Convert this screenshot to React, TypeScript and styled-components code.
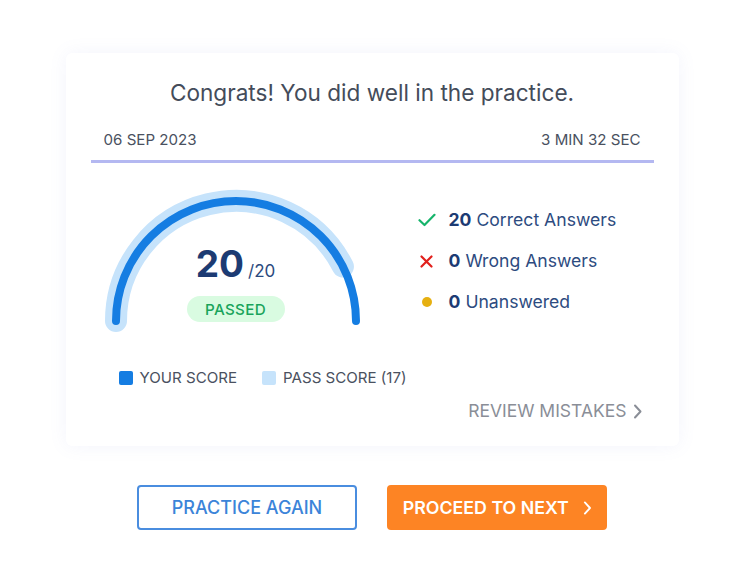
import React from "react";
import styled, { createGlobalStyle } from "styled-components";

// Page-wide reset and font
const GlobalStyle = createGlobalStyle`
  html, body {
    margin: 0;
    background: #ffffff;
    font-family: Inter, "Noto Sans", Arial, sans-serif;
  }
`;

const Page = styled.main`
  width: 744px;
  height: 578px;
  box-sizing: border-box;
  padding-top: 53px;
  display: flex;
  flex-direction: column;
  align-items: center;
`;

// White result card with a faint bluish shadow
const Card = styled.section`
  width: 613px;
  box-sizing: border-box;
  padding: 28px 25px 24px;
  background: #ffffff;
  border-radius: 6px;
  box-shadow: 0 0 18px rgba(120, 130, 220, 0.09);
`;

const Title = styled.h1`
  margin: 0;
  text-align: center;
  font-size: 22.6px;
  line-height: 24px;
  font-weight: 400;
  color: #444c5a;
`;

const MetaRow = styled.div`
  margin-top: 25px;
  padding: 0 13px 10px;
  display: flex;
  justify-content: space-between;
  font-size: 15.1px;
  line-height: 20px;
  color: #4a5160;
  border-bottom: 3px solid #b4b8f1;
`;

const Body = styled.div`
  margin-top: 23px;
  display: flex;
  gap: 46px;
`;

const GaugeBox = styled.div`
  position: relative;
  margin-left: 10px;
  width: 270px;
  height: 150px;
`;

const GaugeCenter = styled.div`
  position: absolute;
  left: 0;
  right: 0;
  top: 56px;
  display: flex;
  flex-direction: column;
  align-items: center;
`;

const Score = styled.div`
  display: flex;
  align-items: baseline;
  gap: 4px;
  color: #1c3b73;
  .value {
    font-size: 37px;
    line-height: 44px;
    font-weight: 700;
  }
  .total {
    font-size: 17px;
    font-weight: 400;
    color: #2b4a7e;
  }
`;

const Badge = styled.span`
  margin-top: 10px;
  width: 98px;
  height: 26px;
  border-radius: 13px;
  background: #d9fbe1;
  color: #19a45b;
  font-size: 15.2px;
  font-weight: 500;
  letter-spacing: 0.3px;
  display: flex;
  align-items: center;
  justify-content: center;
`;

const StatList = styled.ul`
  list-style: none;
  margin: 22px 0 0;
  padding: 0;
  display: flex;
  flex-direction: column;
  gap: 17px;
`;

const Stat = styled.li`
  display: flex;
  align-items: center;
  font-size: 17.6px;
  line-height: 24px;
  color: #2d4b80;
  b {
    color: #1c3b73;
    font-weight: 700;
    margin-right: 5px;
  }
`;

const StatIcon = styled.span`
  width: 20px;
  height: 20px;
  margin-right: 12px;
  display: flex;
  align-items: center;
  justify-content: center;
`;

const Dot = styled.span`
  width: 10px;
  height: 10px;
  border-radius: 50%;
  background: #e6b011;
`;

const Legend = styled.div`
  margin-top: 32px;
  padding-left: 28px;
  display: flex;
  gap: 25px;
  font-size: 15.1px;
  line-height: 20px;
  color: #4a5160;
`;

const LegendItem = styled.span`
  display: flex;
  align-items: center;
  gap: 7px;
`;

const Swatch = styled.span<{ $color: string }>`
  width: 14px;
  height: 14px;
  border-radius: 2px;
  background: ${(p) => p.$color};
`;

const ReviewRow = styled.div`
  margin-top: 12px;
  padding-right: 12px;
  display: flex;
  justify-content: flex-end;
`;

const ReviewLink = styled.a`
  display: flex;
  align-items: center;
  gap: 6px;
  font-size: 17.5px;
  line-height: 22px;
  color: #8a8e97;
  cursor: pointer;
`;

const Actions = styled.div`
  margin-top: 39px;
  display: flex;
  gap: 30px;
`;

const Button = styled.button<{ $primary?: boolean }>`
  width: 220px;
  height: 45px;
  box-sizing: border-box;
  border-radius: 4px;
  font-family: inherit;
  font-size: ${(p) => (p.$primary ? "17.8px" : "18px")};
  font-weight: ${(p) => (p.$primary ? 600 : 500)};
  display: flex;
  align-items: center;
  justify-content: center;
  gap: 14px;
  cursor: pointer;
  border: 2px solid ${(p) => (p.$primary ? "#fd8424" : "#4a8ddf")};
  background: ${(p) => (p.$primary ? "#fd8424" : "#ffffff")};
  color: ${(p) => (p.$primary ? "#ffffff" : "#3b84d9")};
`;

const Chevron: React.FC<{ color: string; size?: number; width?: number }> = ({
  color,
  size = 14,
  width = 2,
}) => (
  <svg width={size * 0.6} height={size} viewBox="0 0 9 15" fill="none">
    <path
      d="M2 1.5 L7.5 7.5 L2 13.5"
      stroke={color}
      strokeWidth={width}
      strokeLinecap="round"
      strokeLinejoin="round"
    />
  </svg>
);

// Half-circle gauge: pass mark as a wide light band, the score as a thin dark arc
const Gauge: React.FC<{ score: number; pass: number; total: number }> = ({
  score,
  pass,
  total,
}) => {
  const cx = 135;
  const cy = 135;
  const r = 120;
  const arc = (frac: number) => {
    const a = Math.PI * (1 - frac);
    const x = cx + r * Math.cos(a);
    const y = cy - r * Math.sin(a);
    return `M ${cx - r} ${cy} A ${r} ${r} 0 0 1 ${x.toFixed(2)} ${y.toFixed(2)}`;
  };
  return (
    <svg width="270" height="150" viewBox="0 0 270 150">
      <path
        d={arc(pass / total)}
        stroke="#c6e3fb"
        strokeWidth="22"
        fill="none"
        strokeLinecap="round"
      />
      <path
        d={arc(score / total)}
        stroke="#157de2"
        strokeWidth="8"
        fill="none"
        strokeLinecap="round"
      />
    </svg>
  );
};

const App: React.FC = () => {
  const score = 20;
  const total = 20;
  const pass = 17;

  return (
    <Page>
      <GlobalStyle />
      <Card>
        <Title>Congrats! You did well in the practice.</Title>
        <MetaRow>
          <span>06 SEP 2023</span>
          <span>3 MIN 32 SEC</span>
        </MetaRow>

        <Body>
          <GaugeBox>
            <Gauge score={score} pass={pass} total={total} />
            <GaugeCenter>
              <Score>
                <span className="value">{score}</span>
                <span className="total">/{total}</span>
              </Score>
              <Badge>PASSED</Badge>
            </GaugeCenter>
          </GaugeBox>

          <StatList>
            <Stat>
              <StatIcon>
                <svg width="18" height="14" viewBox="0 0 18 14" fill="none">
                  <path
                    d="M1.5 7.2 L6.5 12 L16.5 1.8"
                    stroke="#16b46b"
                    strokeWidth="2.2"
                    strokeLinecap="round"
                    strokeLinejoin="round"
                  />
                </svg>
              </StatIcon>
              <b>20</b> Correct Answers
            </Stat>
            <Stat>
              <StatIcon>
                <svg width="13" height="13" viewBox="0 0 13 13" fill="none">
                  <path
                    d="M1.5 1.5 L11.5 11.5 M11.5 1.5 L1.5 11.5"
                    stroke="#e1201c"
                    strokeWidth="2.2"
                    strokeLinecap="round"
                  />
                </svg>
              </StatIcon>
              <b>0</b> Wrong Answers
            </Stat>
            <Stat>
              <StatIcon>
                <Dot />
              </StatIcon>
              <b>0</b> Unanswered
            </Stat>
          </StatList>
        </Body>

        <Legend>
          <LegendItem>
            <Swatch $color="#157de2" />
            YOUR SCORE
          </LegendItem>
          <LegendItem>
            <Swatch $color="#c6e3fb" />
            PASS SCORE ({pass})
          </LegendItem>
        </Legend>

        <ReviewRow>
          <ReviewLink>
            REVIEW MISTAKES
            <Chevron color="#8a8e97" size={15} width={2} />
          </ReviewLink>
        </ReviewRow>
      </Card>

      <Actions>
        <Button>PRACTICE AGAIN</Button>
        <Button $primary>
          PROCEED TO NEXT
          <Chevron color="#ffffff" size={14} width={2} />
        </Button>
      </Actions>
    </Page>
  );
};

export default App;
